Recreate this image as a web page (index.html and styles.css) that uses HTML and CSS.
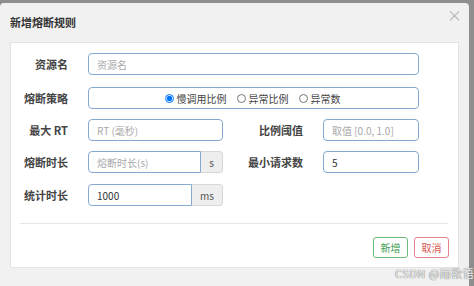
FILE: index.html
```html
<!DOCTYPE html>
<html lang="zh-CN">

<head>
  <meta charset="UTF-8">
  <title>新增熔断规则</title>
  <link rel="stylesheet" href="styles.css">
</head>

<body>

  <div class="modal">
    <div class="modal-header">
      <span class="modal-title">新增熔断规则</span>
      <span class="close">×</span>
    </div>

    <div class="panel">
      <form class="rule-form">
        <div class="row">
          <label class="label">资源名</label>
          <input class="input wide" type="text" placeholder="资源名">
        </div>

        <div class="row">
          <label class="label">熔断策略</label>
          <div class="input wide radios">
            <label class="radio"><input type="radio" name="grade" checked> 慢调用比例</label>
            <label class="radio"><input type="radio" name="grade"> 异常比例</label>
            <label class="radio"><input type="radio" name="grade"> 异常数</label>
          </div>
        </div>

        <div class="row">
          <label class="label">最大 RT</label>
          <input class="input half" type="text" placeholder="RT (毫秒)">
          <label class="label label-right">比例阈值</label>
          <input class="input small" type="text" placeholder="取值 [0.0, 1.0]">
        </div>

        <div class="row">
          <label class="label">熔断时长</label>
          <div class="input-group half">
            <input class="input" type="text" placeholder="熔断时长(s)">
            <span class="addon">s</span>
          </div>
          <label class="label label-right">最小请求数</label>
          <input class="input small" type="text" value="5">
        </div>

        <div class="row row-last">
          <label class="label">统计时长</label>
          <div class="input-group half">
            <input class="input" type="text" value="1000">
            <span class="addon">ms</span>
          </div>
        </div>
      </form>

      <div class="divider"></div>

      <div class="footer">
        <button class="btn btn-ok">新增</button>
        <button class="btn btn-cancel">取消</button>
      </div>
    </div>
  </div>

  <div class="watermark">CSDN @雨欲语</div>

</body>

</html>
```

FILE: styles.css
```css
body {
  margin: 0;
  padding: 0;
  height: 286px;
  overflow: hidden;
  background-color: #8e8e8e;
  font-family: "Noto Sans CJK SC", "Liberation Sans", sans-serif;
  color: #333;
}

.modal {
  width: 469px;
  height: 283px;
  margin-top: 3px;
  background-color: #f1f1f1;
  border-radius: 4px 4px 0 0;
}

.modal-header {
  height: 39px;
  padding: 0 10px;
  display: flex;
  align-items: center;
  justify-content: space-between;
}

.modal-title {
  font-size: 11px;
  font-weight: bold;
  color: #333;
  margin-top: -2px;
}

.close {
  font-size: 15px;
  color: #b5b5b5;
  margin-top: -17px;
  margin-right: -3px;
}

.panel {
  margin: 0 10px;
  height: 226px;
  background-color: white;
  border: 1px solid #e4e4e4;
  padding-top: 10px;
  box-sizing: border-box;
}

.rule-form {
  display: flex;
  flex-direction: column;
  gap: 10px;
}

.row {
  display: flex;
  align-items: center;
  height: 22px;
}

.row:first-child {
  margin-bottom: 2px;
}

.row-last {
  margin-top: 1px;
}

.label {
  width: 57px;
  margin-right: 20px;
  text-align: right;
  font-size: 11px;
  font-weight: bold;
  color: #444;
}

.label-right {
  width: 80px;
  margin-right: 20px;
}

.input {
  height: 22px;
  box-sizing: border-box;
  border: 1px solid #86a9cf;
  border-radius: 4px;
  padding: 0 8px;
  font-family: inherit;
  font-size: 10px;
  color: #333;
  background-color: white;
  outline: none;
}

.input::placeholder {
  color: #a9a9a9;
}

.wide {
  width: 331px;
}

.half {
  width: 135px;
}

.small {
  width: 96px;
}

.radios {
  display: flex;
  align-items: center;
  justify-content: center;
  gap: 10px;
  padding-left: 6px;
}

.radio {
  display: flex;
  align-items: center;
  font-size: 10px;
  color: #444;
}

.radio input {
  width: 9px;
  height: 9px;
  margin: 0 3px 0 0;
}

.input-group {
  display: flex;
  height: 22px;
}

.input-group .input {
  flex: 1;
  min-width: 0;
  border-radius: 4px 0 0 4px;
}

.addon {
  display: flex;
  align-items: center;
  padding: 0 8px;
  font-size: 10px;
  color: #555;
  background-color: #eeeeee;
  border: 1px solid #d6d6d6;
  border-left: none;
  border-radius: 0 4px 4px 0;
}

.divider {
  height: 1px;
  background-color: #e6e6e6;
  margin: 17px 10px 0 9px;
}

.footer {
  display: flex;
  justify-content: flex-end;
  gap: 6px;
  margin-top: 13px;
  padding-right: 9px;
}

.btn {
  width: 35px;
  height: 21px;
  padding: 0;
  background-color: white;
  border-radius: 3px;
  font-family: inherit;
  font-size: 10px;
  cursor: pointer;
}

.btn-ok {
  color: #3a9e4e;
  border: 1px solid #6cbb7c;
}

.btn-cancel {
  color: #d9534f;
  border: 1px solid #e0868a;
}

.watermark {
  position: absolute;
  left: 395px;
  top: 265px;
  white-space: nowrap;
  font-size: 11px;
  letter-spacing: 0.5px;
  color: rgba(255, 255, 255, 0.9);
  text-shadow: 0 0 1px #777, 0 0 1px #777;
}
```
